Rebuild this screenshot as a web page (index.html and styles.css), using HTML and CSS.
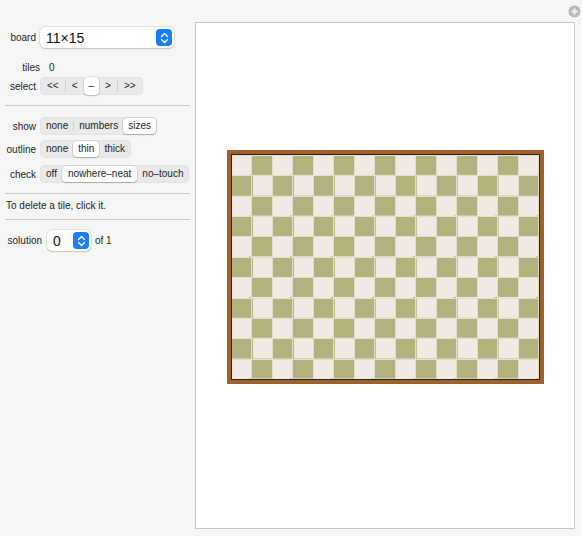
FILE: index.html
```html
<!DOCTYPE html>
<html lang="en">
<head>
    <meta charset="UTF-8">
    <title>Tiles</title>
    <link rel="stylesheet" href="styles.css">
</head>
<body>
    <!-- 右上角按钮 -->
    <div class="corner-btn">
        <svg width="13" height="13" viewBox="0 0 13 13">
            <circle cx="6.5" cy="6.5" r="6" fill="#b8b8b8"/>
            <path d="M6.5 3.5v6M3.5 6.5h6" stroke="#f4f4f4" stroke-width="2"/>
        </svg>
    </div>

    <div class="app">
        <!-- 控件栏 -->
        <div class="controls">
            <div class="row row-board">
                <span class="label">board</span>
                <div class="popup">
                    <span class="popup-text">11×15</span>
                    <span class="stepper">
                        <svg width="9" height="12" viewBox="0 0 9 12">
                            <path d="M1.5 4.5L4.5 1.5L7.5 4.5M1.5 7.5L4.5 10.5L7.5 7.5" fill="none" stroke="#fff" stroke-width="1.4" stroke-linecap="round" stroke-linejoin="round"/>
                        </svg>
                    </span>
                </div>
            </div>

            <div class="row row-tiles">
                <span class="label label-wide">tiles</span>
                <span class="value">0</span>
            </div>

            <div class="row row-select">
                <span class="label">select</span>
                <div class="seg">
                    <span class="seg-item">&lt;&lt;</span>
                    <span class="seg-sep"></span>
                    <span class="seg-item">&lt;</span>
                    <span class="seg-item active">–</span>
                    <span class="seg-item">&gt;</span>
                    <span class="seg-sep"></span>
                    <span class="seg-item">&gt;&gt;</span>
                </div>
            </div>

            <div class="divider div-1"></div>

            <div class="row row-show">
                <span class="label">show</span>
                <div class="seg">
                    <span class="seg-item">none</span>
                    <span class="seg-sep"></span>
                    <span class="seg-item">numbers</span>
                    <span class="seg-item active">sizes</span>
                </div>
            </div>

            <div class="row row-outline">
                <span class="label">outline</span>
                <div class="seg">
                    <span class="seg-item">none</span>
                    <span class="seg-item active">thin</span>
                    <span class="seg-item">thick</span>
                </div>
            </div>

            <div class="row row-check">
                <span class="label">check</span>
                <div class="seg">
                    <span class="seg-item">off</span>
                    <span class="seg-item active">nowhere–neat</span>
                    <span class="seg-item">no–touch</span>
                </div>
            </div>

            <div class="divider div-2"></div>

            <div class="hint">To delete a tile, click it.</div>

            <div class="divider div-3"></div>

            <div class="row row-solution">
                <span class="label label-sol">solution</span>
                <div class="popup popup-small">
                    <span class="popup-text">0</span>
                    <span class="stepper">
                        <svg width="9" height="12" viewBox="0 0 9 12">
                            <path d="M1.5 4.5L4.5 1.5L7.5 4.5M1.5 7.5L4.5 10.5L7.5 7.5" fill="none" stroke="#fff" stroke-width="1.4" stroke-linecap="round" stroke-linejoin="round"/>
                        </svg>
                    </span>
                </div>
                <span class="of">of 1</span>
            </div>
        </div>

        <!-- 棋盘区域 -->
        <div class="panel">
            <div class="frame">
                <div class="board"></div>
            </div>
        </div>
    </div>
</body>
</html>
```

FILE: styles.css
```css
/* 页面整体样式 */
body {
    margin: 0;
    background: #f6f6f6;
    font-family: 'Liberation Sans', Arial, sans-serif;
    color: #1e1e1e;
    position: relative;
    width: 582px;
    height: 536px;
    overflow: hidden;
}

/* 右上角按钮 */
.corner-btn {
    position: absolute;
    top: 5px;
    left: 568px;
    line-height: 0;
}

.app {
    display: flex;
    padding-top: 22px;
    height: 507px;
}

/* 控件栏 */
.controls {
    width: 195px;
    flex: none;
    padding-top: 5px;
    box-sizing: border-box;
}

.row {
    display: flex;
    align-items: center;
    font-size: 10px;
}

.label {
    width: 36px;
    text-align: right;
    margin-right: 4px;
    flex: none;
}

.label-wide {
    width: 40px;
    margin-right: 9px;
}

.label-sol {
    width: 42px;
    margin-right: 5px;
}

.row-board {
    height: 21px;
}

.row-tiles {
    margin-top: 11px;
    height: 16px;
}

.row-select {
    margin-top: 2px;
    height: 18px;
}

.row-show {
    margin-top: 0;
    height: 18px;
}

.row-outline {
    margin-top: 5px;
    height: 18px;
}

.row-check {
    margin-top: 7px;
    height: 18px;
}

.row-solution {
    margin-top: 10px;
    height: 21px;
}

/* 下拉菜单 */
.popup {
    width: 134px;
    height: 21px;
    box-sizing: border-box;
    background: #fff;
    border-radius: 5px;
    box-shadow: 0 0 0 0.5px rgba(0, 0, 0, 0.15), 0 1px 1.5px rgba(0, 0, 0, 0.15);
    display: flex;
    align-items: center;
    justify-content: space-between;
    padding: 0 2px 0 6px;
}

.popup-text {
    font-size: 14px;
    color: #111;
}

.popup-small {
    width: 44px;
    padding-left: 6px;
}

.stepper {
    width: 16px;
    height: 17px;
    border-radius: 4px;
    background: #1a7cf6;
    display: flex;
    align-items: center;
    justify-content: center;
}

.of {
    margin-left: 4px;
}

/* 分段控件 */
.seg {
    display: flex;
    align-items: center;
    height: 18px;
    background: #e9e9e9;
    border-radius: 5px;
    box-shadow: inset 0 0 0 0.5px rgba(0, 0, 0, 0.06);
    padding: 0 1px;
}

.seg-item {
    padding: 0 5px;
    height: 16px;
    line-height: 16px;
    border-radius: 4px;
}

.seg-item.active {
    background: #fff;
    box-shadow: 0 0 0 0.5px rgba(0, 0, 0, 0.15), 0 1px 1.5px rgba(0, 0, 0, 0.2);
}

.row-select .seg-item {
    padding: 0 6px;
}

.row-select .seg-item.active {
    padding: 0 5px;
    height: 18px;
    line-height: 18px;
}

.row-check .seg-item.active {
    padding: 0 6px;
}

.seg-sep {
    width: 1px;
    height: 10px;
    background: #cfcfcf;
}

/* 分隔线 */
.divider {
    height: 1px;
    background: #cacaca;
    margin-left: 5px;
    width: 185px;
}

.div-1 {
    margin-top: 10px;
    margin-bottom: 11px;
}

.div-2 {
    margin-top: 10px;
}

.div-3 {
    margin-top: 0;
}

.hint {
    font-size: 10px;
    padding: 6px 0 8px 6px;
}

/* 棋盘区域 */
.panel {
    flex: 1;
    margin-right: 7px;
    background: #fff;
    border: 1px solid #c6c6c6;
    display: flex;
    align-items: center;
    justify-content: center;
    padding-bottom: 18px;
}

.frame {
    border: 4px solid #9c612c;
    line-height: 0;
}

.board {
    width: 307px;
    height: 224px;
    border: 1px solid #2b2616;
    background:
        repeating-linear-gradient(90deg, transparent 0 19.47px, #e2dfc8 19.47px 20.47px),
        repeating-linear-gradient(0deg, transparent 0 19.36px, #e2dfc8 19.36px 20.36px),
        repeating-conic-gradient(#b3b27e 0 25%, #f0e9e4 0 50%) 0 0 / 40.94px 40.72px;
}
```
